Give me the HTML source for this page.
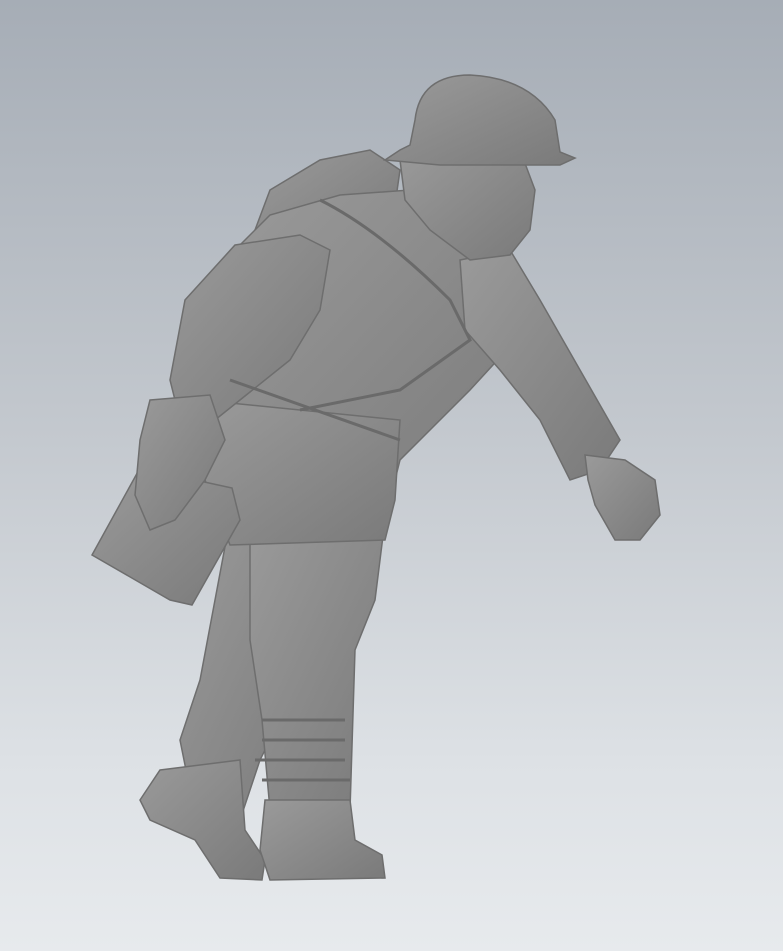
<!DOCTYPE html>
<html><head><meta charset="utf-8"><style>
html,body{margin:0;padding:0;}
body{width:783px;height:951px;overflow:hidden;background:linear-gradient(180deg,#a6adb6 0%,#c3c8ce 45%,#dde1e5 80%,#e7eaed 100%);}
svg{position:absolute;left:0;top:0;}
</style></head><body>
<svg width="783" height="951" viewBox="0 0 783 951">
<defs>
<linearGradient id="g" x1="0" y1="0" x2="1" y2="1">
<stop offset="0" stop-color="#9a9a9a"/><stop offset="1" stop-color="#7a7a7a"/>
</linearGradient>
</defs>
<g fill="url(#g)" stroke="#6e6e6e" stroke-width="1.5">
<!-- backpack -->
<path d="M255,230 L270,190 L320,160 L370,150 L400,170 L390,240 L300,250 Z"/>
<!-- back leg -->
<path d="M230,520 L320,540 L300,680 L260,760 L240,820 L190,790 L180,740 L200,680 Z"/>
<!-- back boot -->
<path d="M160,770 L240,760 L245,830 L265,860 L262,880 L220,878 L195,840 L150,820 L140,800 Z"/>
<!-- front leg -->
<path d="M250,520 L385,520 L375,600 L355,650 L350,810 L270,810 L262,720 L250,640 Z"/>
<!-- front boot -->
<path d="M265,800 L350,800 L355,840 L382,855 L385,878 L270,880 L260,850 Z"/>
<!-- torso -->
<path d="M225,260 L270,215 L340,195 L410,190 L470,220 L510,260 L525,330 L470,390 L440,420 L400,460 L390,500 L300,520 L230,490 L215,420 Z"/>
<!-- skirt / belt -->
<path d="M200,400 L400,420 L395,500 L385,540 L230,545 L205,480 Z"/>
<!-- right arm -->
<path d="M460,260 L510,250 L540,300 L580,370 L620,440 L600,470 L570,480 L540,420 L500,370 L465,330 Z"/>
<!-- fist -->
<path d="M585,455 L625,460 L655,480 L660,515 L640,540 L615,540 L595,505 L588,480 Z"/>
<!-- left arm -->
<path d="M235,245 L300,235 L330,250 L320,310 L290,360 L240,400 L215,420 L180,420 L170,380 L185,300 Z"/>
<!-- box -->
<path d="M92,555 L140,468 L232,488 L240,520 L192,605 L170,600 Z"/>
<!-- hand -->
<path d="M150,400 L210,395 L225,440 L205,480 L175,520 L150,530 L135,495 L140,440 Z"/>
<!-- head -->
<path d="M400,160 L520,150 L535,190 L530,230 L510,255 L470,260 L430,230 L405,200 Z"/>
<!-- helmet -->
<path d="M415,120 Q420,75 470,75 Q530,78 555,120 L560,152 L575,158 L560,165 L440,165 L385,160 L400,150 L410,145 Z"/>
</g>
<g fill="none" stroke="#6a6a6a" stroke-width="3">
<path d="M320,200 Q380,230 450,300 L470,340 L400,390 L300,410"/>
<path d="M230,380 L400,440"/>
<path d="M255,760 L345,760 M262,780 L350,780 M262,740 L345,740 M262,720 L345,720"/>
</g>
</svg>
</body></html>
